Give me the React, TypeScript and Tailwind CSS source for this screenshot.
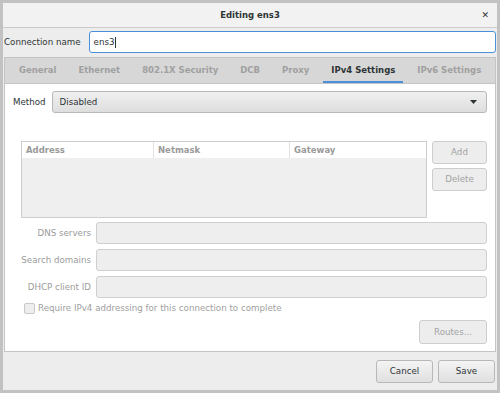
import React from "react";

const font = { fontFamily: '"DejaVu Sans", "Liberation Sans", sans-serif' };

function DisabledInput() {
  return <div className="h-[22px] flex-1 rounded-[3px] border border-[#cfcfcf] bg-[#eeeeee]" />;
}

function Row({ label }: { label: string }) {
  return (
    <div className="flex items-center gap-[5px]">
      <div className="w-[70px] text-right text-[#9b9b9b] whitespace-nowrap">{label}</div>
      <DisabledInput />
    </div>
  );
}

function DisabledButton({ label, className }: { label: string; className: string }) {
  return (
    <div
      className={`flex items-center justify-center rounded-[3px] border border-[#cdcdcd] bg-[#ededed] text-[#a3a3a3] ${className}`}
    >
      {label}
    </div>
  );
}

export default function App() {
  const tabs = ["General", "Ethernet", "802.1X Security", "DCB", "Proxy", "IPv4 Settings", "IPv6 Settings"];
  return (
    <div className="w-[500px] h-[393px] bg-[#c2c2c2] p-[3px] text-[8.7px] leading-none" style={font}>
      <div className="flex h-full flex-col bg-[#ededed]">
        {/* title bar */}
        <div className="relative flex h-[25px] shrink-0 items-center justify-center border-b border-[#cbcbcb] bg-[#f2f2f2]">
          <span className="font-bold text-[8.5px] text-[#2e3436]">Editing ens3</span>
          <span className="absolute right-[8px] top-[8px] font-bold text-[9px] text-[#2e3436]">✕</span>
        </div>
        {/* connection name */}
        <div className="flex shrink-0 items-center gap-[8px] pl-[1px] pr-[1px] pt-[3px] pb-[4px]">
          <span className="text-[#2e3436] whitespace-nowrap">Connection name</span>
          <div className="flex h-[22px] flex-1 items-center rounded-[3px] border border-[#4a90d9] bg-white pl-[4px] text-[#2e3436]">
            ens3<span className="ml-[0.5px] inline-block h-[11px] w-[1px] bg-[#2e3436]" />
          </div>
        </div>
        {/* notebook */}
        <div className="mx-[1px] flex flex-1 flex-col border border-[#c4c4c4] bg-white">
          <div className="flex h-[26px] shrink-0 items-stretch border-b border-[#c4c4c4] bg-[#d7d7d7] pl-[3px] text-[8.5px]">
            {tabs.map((t) => (
              <div
                key={t}
                className={`mx-[3px] flex items-center px-[8px] font-bold whitespace-nowrap ${
                  t === "IPv4 Settings"
                    ? "border-b-[2px] border-[#4a90d9] pt-[2px] text-[#2e3436]"
                    : "text-[#a0a0a0]"
                }`}
              >
                {t}
              </div>
            ))}
          </div>
          <div className="flex flex-1 flex-col px-[8px] pt-[7px]">
            {/* method */}
            <div className="flex items-center gap-[6px]">
              <span className="text-[#2e3436]">Method</span>
              <div className="flex h-[22px] flex-1 items-center justify-between rounded-[3px] border border-[#b8b8b8] bg-gradient-to-b from-[#f0f0f0] to-[#dedede] pl-[7px] pr-[9px] text-[#2e3436]">
                <span>Disabled</span>
                <svg width="7" height="4" viewBox="0 0 7 4">
                  <path d="M0 0 L7 0 L3.5 4 Z" fill="#2e3436" />
                </svg>
              </div>
            </div>
            {/* addresses */}
            <div className="mt-[28px] ml-[8px] flex gap-[5px]">
              <div className="flex h-[77px] w-[406px] flex-col border border-[#cdcdcd] bg-[#efefef]">
                <div className="flex h-[16px] shrink-0 bg-white font-bold text-[8.5px] text-[#9a9a9a]">
                  <div className="flex w-[132px] items-center border-r border-[#e2e2e2] pl-[4px]">Address</div>
                  <div className="flex w-[136px] items-center border-r border-[#e2e2e2] pl-[4px]">Netmask</div>
                  <div className="flex flex-1 items-center pl-[4px]">Gateway</div>
                </div>
              </div>
              <div className="flex flex-1 flex-col gap-[4px]">
                <DisabledButton label="Add" className="h-[23px]" />
                <DisabledButton label="Delete" className="h-[23px]" />
              </div>
            </div>
            {/* entries */}
            <div className="mt-[4px] ml-[8px] flex flex-col gap-[5px]">
              <Row label="DNS servers" />
              <Row label="Search domains" />
              <Row label="DHCP client ID" />
            </div>
            <div className="mt-[5px] ml-[11px] flex items-center gap-[3px]">
              <div className="h-[11px] w-[11px] rounded-[2px] border border-[#c8c8c8] bg-[#eeeeee]" />
              <span className="text-[#a0a0a0]">Require IPv4 addressing for this connection to complete</span>
            </div>
            <div className="mt-[6px] flex justify-end">
              <DisabledButton label="Routes..." className="h-[24px] w-[68px]" />
            </div>
          </div>
        </div>
        {/* bottom */}
        <div className="flex h-[38px] shrink-0 items-center justify-end gap-[5px] pr-[2px] pt-[1px]">
          <div className="flex h-[23px] w-[57px] items-center justify-center rounded-[3px] border border-[#b8b8b8] bg-gradient-to-b from-[#f4f4f4] to-[#e0e0e0] text-[#2e3436]">
            Cancel
          </div>
          <div className="flex h-[23px] w-[57px] items-center justify-center rounded-[3px] border border-[#b8b8b8] bg-gradient-to-b from-[#f4f4f4] to-[#e0e0e0] text-[#2e3436]">
            Save
          </div>
        </div>
      </div>
    </div>
  );
}
